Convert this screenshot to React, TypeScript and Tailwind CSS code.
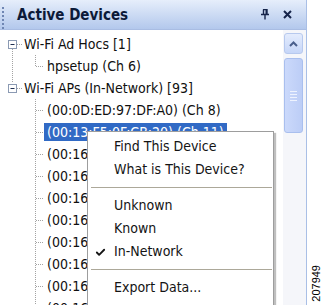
import { Check } from 'lucide-react'

const FONT = "[font-family:'DejaVu_Sans_Condensed','DejaVu_Sans',sans-serif] [font-stretch:condensed]"

const MORE_APS = [
  '(00:16:B6:1A:44:0C) (Ch 1)',
  '(00:16:B6:2F:91:E3) (Ch 6)',
  '(00:16:B6:3C:07:5A) (Ch 6)',
  '(00:16:B6:41:D2:18) (Ch 11)',
  '(00:16:B6:58:AE:70) (Ch 1)',
  '(00:16:B6:6B:13:9F) (Ch 6)',
  '(00:16:B6:7E:C4:21) (Ch 11)',
  '(00:16:B6:82:5D:B7) (Ch 1)',
  '(00:16:B6:9A:66:02) (Ch 6)',
]

// dotted tree connector for a top level node
function RootLines({ up, down }: { up?: boolean; down?: boolean }) {
  return (
    <svg width="22" height="22" className="shrink-0" aria-hidden="true">
      <g stroke="#a3a3a3" strokeDasharray="1 1">
        {up && <line x1="12.5" y1="0" x2="12.5" y2="6" />}
        {down && <line x1="12.5" y1="16" x2="12.5" y2="22" />}
        <line x1="17" y1="11.5" x2="22" y2="11.5" />
      </g>
      <rect x="8.5" y="7.5" width="8" height="8" fill="#fff" stroke="#8b9ab3" />
      <line x1="10.5" y1="11.5" x2="14.5" y2="11.5" stroke="#1f2f52" />
    </svg>
  )
}

function ChildLines({ last, rootThrough }: { last?: boolean; rootThrough?: boolean }) {
  return (
    <svg width="44" height="22" className="shrink-0" aria-hidden="true">
      <g stroke="#a3a3a3" strokeDasharray="1 1">
        {rootThrough && <line x1="12.5" y1="0" x2="12.5" y2="22" />}
        <line x1="35.5" y1="0" x2="35.5" y2={last ? 11.5 : 22} />
        <line x1="36" y1="11.5" x2="44" y2="11.5" />
      </g>
    </svg>
  )
}

function TitleBar() {
  return (
    <div className="h-[30px] shrink-0 flex items-center bg-gradient-to-b from-[#e6eefb] to-[#b3c8ec] border-b border-[#a9bde3]">
      <div className="w-[17px] h-full flex flex-col items-start pl-[2px] pt-[7px] gap-[2px]">
        {[0, 1, 2, 3, 4, 5].map(i => (
          <span key={i} className="block w-[2px] h-[2px] bg-[#6f86b3]" />
        ))}
      </div>
      <span className="flex-1 text-[15px] font-bold text-[#0c1a38] leading-none pt-[1px]">Active Devices</span>
      <svg width="10" height="11" viewBox="0 0 10 11" className="mr-[13px]" aria-hidden="true">
        <path d="M3 0.5h4v5M3.5 0.5v5M1 5.5h8M5 5.5v5" stroke="#16244a" strokeWidth="1.4" fill="none" />
        <rect x="5.5" y="0.5" width="1.5" height="5" fill="#16244a" />
      </svg>
      <svg width="9" height="9" viewBox="0 0 9 9" className="mr-[14px]" aria-hidden="true">
        <path d="M1 1l7 7M8 1l-7 7" stroke="#16244a" strokeWidth="2" />
      </svg>
    </div>
  )
}

function ScrollBar() {
  return (
    <div className="w-[23px] shrink-0 bg-[#f5f6fa] pl-[1px] pr-[3px] pt-[3px] flex flex-col">
      <div className="h-[21px] rounded-[3px] border border-[#b7c9ee] bg-gradient-to-b from-[#e4ecfd] to-[#c6d6f8] flex items-center justify-center">
        <svg width="9" height="6" viewBox="0 0 9 6" aria-hidden="true">
          <path d="M1 5l3.5-3.5L8 5" stroke="#4a5f8c" strokeWidth="2" fill="none" />
        </svg>
      </div>
      <div className="mt-[4px] h-[75px] rounded-[3px] border border-[#a9bfee] bg-gradient-to-r from-[#cbd9fb] to-[#bccdf6] flex flex-col items-center justify-center gap-[2px]">
        {[0, 1, 2, 3].map(i => (
          <span key={i} className="block w-[7px] h-px bg-[#eef3fe]" />
        ))}
      </div>
    </div>
  )
}

function ContextMenu() {
  const item = 'h-[23px] flex items-center pl-[26px] relative'
  const sep = 'h-[13px] flex items-center pl-[3px] pr-[1px]'
  return (
    <div className="absolute left-[87px] top-[131px] w-[187px] bg-white border border-[#9d9d9d] pt-[3px] pb-[6px] shadow-[2px_2px_1px_rgba(0,0,0,0.25)] text-[14px] text-[#141414]">
      <div className={item}>Find This Device</div>
      <div className={item}>What is This Device?</div>
      <div className={sep}><span className="block w-full h-px bg-[#aca899]" /></div>
      <div className={item}>Unknown</div>
      <div className={item}>Known</div>
      <div className={item}>
        <Check className="absolute left-[7px] top-[7px] w-[11px] h-[11px] text-[#141414]" strokeWidth={4} />
        In-Network
      </div>
      <div className={sep}><span className="block w-full h-px bg-[#aca899]" /></div>
      <div className={item}>Export Data...</div>
    </div>
  )
}

export default function App() {
  return (
    <div className={`w-[325px] h-[305px] flex bg-white overflow-hidden ${FONT}`}>
      <div className="relative w-[307px] h-full flex flex-col border-r border-[#a9bfe6]">
        <TitleBar />
        <div className="flex flex-1 min-h-0">
          {/* device tree */}
          <div className="flex-1 min-w-0 overflow-hidden pt-[3px] text-[14px] text-[#101010] whitespace-nowrap">
            <div className="h-[22px] flex items-center">
              <RootLines down />
              <span className="px-[2px] leading-[18px]">Wi-Fi Ad Hocs [1]</span>
            </div>
            <div className="h-[22px] flex items-center">
              <ChildLines last rootThrough />
              <span className="px-[3px] leading-[18px]">hpsetup (Ch 6)</span>
            </div>
            <div className="h-[22px] flex items-center">
              <RootLines up />
              <span className="px-[2px] leading-[18px]">Wi-Fi APs (In-Network) [93]</span>
            </div>
            <div className="h-[22px] flex items-center">
              <ChildLines />
              <span className="px-[3px] leading-[18px]">(00:0D:ED:97:DF:A0) (Ch 8)</span>
            </div>
            <div className="h-[22px] flex items-center">
              <ChildLines />
              <span className="px-[3px] leading-[18px] bg-[#316ac5] text-white">(00:13:F5:0F:CB:20) (Ch 11)</span>
            </div>
            {MORE_APS.map(ap => (
              <div key={ap} className="h-[22px] flex items-center">
                <ChildLines />
                <span className="px-[3px] leading-[18px]">{ap}</span>
              </div>
            ))}
          </div>
          <ScrollBar />
        </div>
        <ContextMenu />
      </div>
      <div className="flex-1 flex flex-col justify-end items-center pb-[3px]">
        <span className="[writing-mode:vertical-rl] rotate-180 text-[11px] leading-none text-black [font-family:'Liberation_Sans',sans-serif]">207949</span>
      </div>
    </div>
  )
}
